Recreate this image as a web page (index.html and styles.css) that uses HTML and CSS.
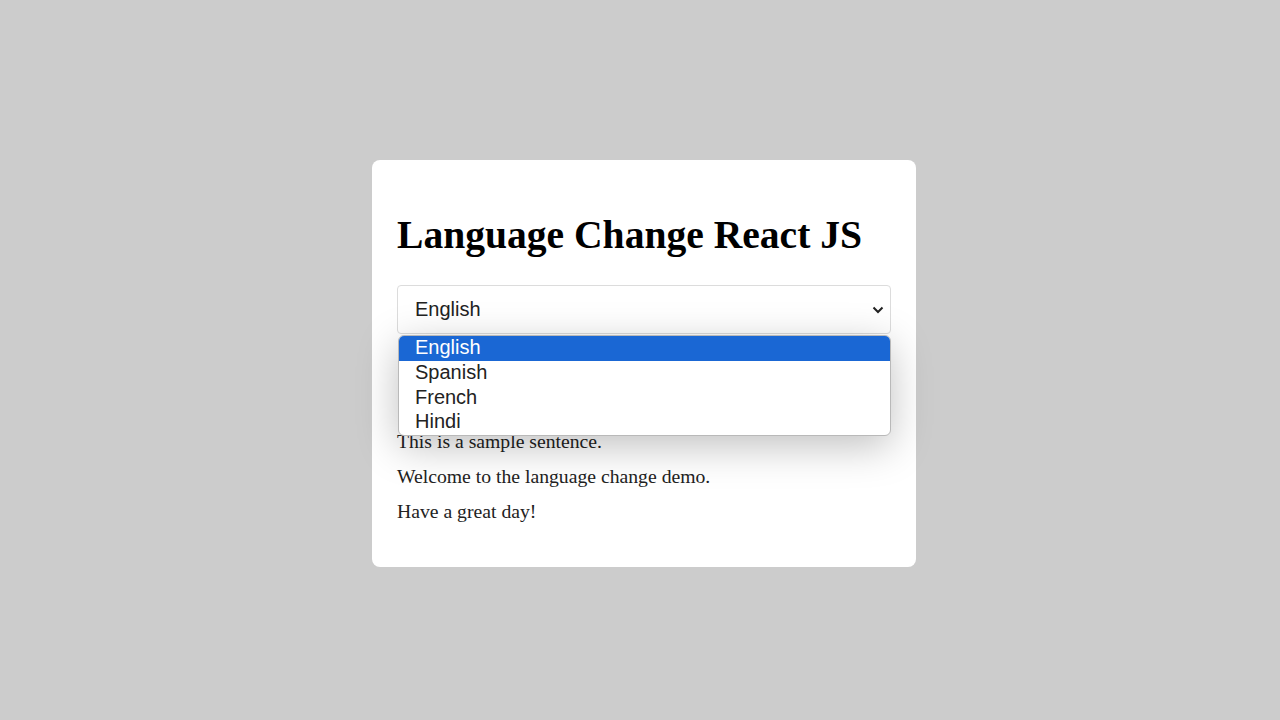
FILE: index.html
```html
<!DOCTYPE html>
<html lang="en">
<head>
  <meta charset="UTF-8" />
  <meta name="viewport" content="width=device-width, initial-scale=1.0"/>
  <title>Language Change React JS</title>
  <link rel="stylesheet" href="styles.css">
</head>
<body>
  <div class="page">
    <div class="card">
      <h1>Language Change React JS</h1>

      <div class="picker">
        <div class="select">
          <span>English</span>
          <svg class="chevron" width="12" height="8" viewBox="0 0 12 8">
            <path d="M1.5 1.5 L6 6 L10.5 1.5" fill="none" stroke="#222" stroke-width="2" />
          </svg>
        </div>
        <ul class="options">
          <li class="active">English</li>
          <li>Spanish</li>
          <li>French</li>
          <li>Hindi</li>
        </ul>
      </div>

      <div class="texts">
        <p>This is a sample sentence.</p>
        <p>Welcome to the language change demo.</p>
        <p>Have a great day!</p>
      </div>
    </div>
  </div>
</body>
</html>
```

FILE: styles.css
```css
body { margin: 0; background: #cccccc; font-family: "Liberation Serif", "Times New Roman", serif; color: #222; }
.page {
  box-sizing: border-box;
  height: 720px;
  display: flex;
  align-items: center;
  justify-content: center;
  padding: 7px 0 0 8px;
}
.card {
  width: 494px;
  background: #fff;
  border-radius: 8px;
  padding: 25px 25px 44px;
}
h1 { font-size: 39.6px; margin: 27px 0 27px; color: #000; }
.picker { position: relative; z-index: 1; }
.select {
  display: flex;
  align-items: center;
  justify-content: space-between;
  height: 47px;
  padding: 0 6px 0 17px;
  border: 1px solid #dcdcdc;
  border-radius: 4px;
  font-family: "Liberation Sans", Arial, sans-serif;
  font-size: 20px;
  color: #222;
}
.options {
  position: absolute;
  top: 50px;
  left: 1px;
  right: 0;
  margin: 0;
  padding: 0;
  list-style: none;
  background: #fff;
  border: 1px solid #b9b9b9;
  border-radius: 6px;
  overflow: hidden;
  box-shadow: 0 10px 40px rgba(0, 0, 0, 0.25);
  font-family: "Liberation Sans", Arial, sans-serif;
  font-size: 20px;
  color: #222;
}
.options li { height: 24.75px; line-height: 23px; padding-left: 16px; }
.options li.active { background: #1a67d4; color: #fff; }
.texts { margin-top: 96px; }
p { font-size: 19.7px; margin: 12px 0 0; }
.texts p:first-child { margin-top: 0; }
```
